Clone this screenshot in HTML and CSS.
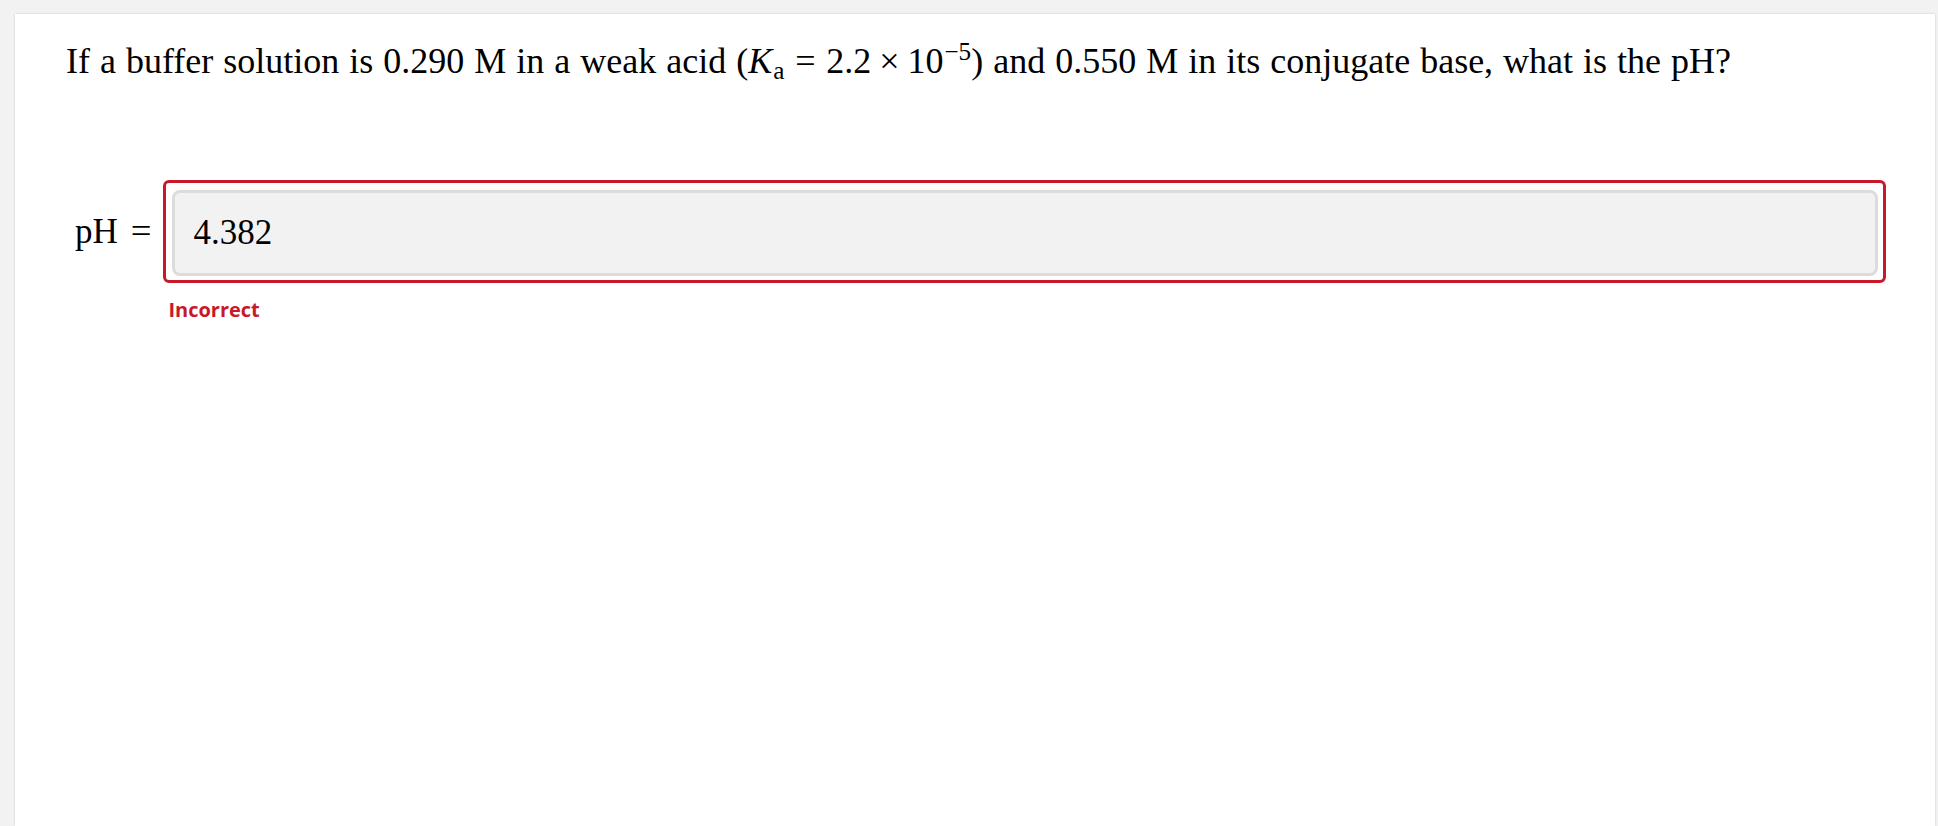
FILE: index.html
```html
<!DOCTYPE html>
<html lang="en">
<head>
  <meta charset="UTF-8">
  <meta name="viewport" content="width=device-width, initial-scale=1">
  <title>Buffer pH</title>
  <link rel="stylesheet" href="styles.css">
</head>
<body>

  <div class="card">
    <p class="question">
      If a buffer solution is 0.290 M in a weak acid
      (<span class="math"><i>K</i><sub>a</sub><span class="rel">=</span>2.2<span class="bin">×</span>10<sup>−5</sup></span>)
      and 0.550 M in its conjugate base, what is the pH?
    </p>

    <div class="answer-row">
      <label class="answer-label" for="ph">pH<span class="rel">=</span></label>
      <div class="answer-field">
        <div class="field-wrap">
          <input type="text" id="ph" value="4.382">
        </div>
        <div class="feedback">Incorrect</div>
      </div>
    </div>
  </div>

</body>
</html>
```

FILE: styles.css
```css
body {
  margin: 0;
  background: #f2f2f2;
  font-family: "Liberation Serif", "Times New Roman", serif;
  color: #000;
}

.card {
  background: #fff;
  margin: 14px 3px 0 15px;
  min-height: calc(100vh - 14px);
  padding: 27px 49px 0 51px;
  box-sizing: border-box;
  box-shadow: 0 0 2px rgba(0,0,0,0.18);
}

.question {
  margin: 0;
  font-size: 36px;
  line-height: 40px;
  word-spacing: 1px;
}

.math i {
  font-style: italic;
}

sub, sup {
  font-size: 0.7em;
  line-height: 0;
}

sub {
  vertical-align: -0.25em;
  margin-left: 1px;
}

sup {
  vertical-align: 0.5em;
  margin-left: 1px;
}

.rel {
  margin: 0 0.3em;
}

.bin {
  margin: 0 0.22em;
}

.answer-row {
  display: flex;
  align-items: flex-start;
  margin-top: 99px;
  margin-left: 9px;
}

.answer-label {
  font-size: 35px;
  line-height: 40px;
  margin-top: 31px;
  margin-right: 1px;
  white-space: nowrap;
}

.answer-label .rel {
  margin: 0 0 0 0.35em;
  font-size: 1.05em;
}

.answer-field {
  flex: 1;
  margin-left: 11px;
}

.field-wrap {
  border: 3px solid #c8182a;
  border-radius: 6px;
  padding: 7px 5px 4px 6px;
}

.field-wrap input {
  display: block;
  width: 100%;
  box-sizing: border-box;
  height: 86px;
  padding: 0 18px;
  font-family: "Liberation Serif", "Times New Roman", serif;
  font-size: 35px;
  color: #000;
  background: #f2f2f2;
  border: 3px solid #dcdcdc;
  border-radius: 8px;
  outline: none;
}

.feedback {
  margin: 13px 0 0 5px;
  font-family: "Open Sans", sans-serif;
  font-weight: 700;
  font-size: 20px;
  color: #c8182a;
}
```
